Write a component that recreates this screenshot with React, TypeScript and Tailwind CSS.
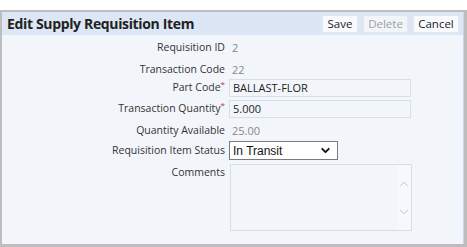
import { ChevronDown, ChevronUp } from "lucide-react";

const font = { fontFamily: "'Open Sans', 'Noto Sans', sans-serif" };

function Label({ text, req }: { text: string; req?: boolean }) {
  return (
    <div className="w-[224px] shrink-0 pr-[1px] text-right text-[10.5px] text-[#333]">
      {text}
      {req && <sup className="text-[8px] text-[#a33]">*</sup>}
    </div>
  );
}

export default function App() {
  return (
    <div className="bg-white pt-[10px] h-[247px]" style={font}>
      <div className="h-[237px] border-t-2 border-l-2 border-r-[3px] border-b-[3px] border-[#bdbdbd]">
        <div className="flex h-full flex-col border-r border-[#c8d7ee] bg-[#f2f6fb]">
          {/* header */}
          <div className="flex h-[23px] items-center justify-between bg-[#dce6f4] pl-[5px] pr-[4px]">
            <h1 className="text-[14px] font-bold text-[#222] tracking-[-0.35px]">Edit Supply Requisition Item</h1>
            <div className="flex gap-[5px]">
              <button className="h-[18px] w-[36px] rounded-[2px] border border-[#e2e8f0] bg-[#f8fafd] text-[11.5px] leading-none text-[#222]">Save</button>
              <button className="h-[18px] w-[45px] rounded-[2px] border border-[#e2e8f0] bg-[#f1f5fa] text-[11.5px] leading-none text-[#9aa0a8]">Delete</button>
              <button className="h-[18px] w-[46px] rounded-[2px] border border-[#e2e8f0] bg-[#f8fafd] text-[11.5px] leading-none text-[#222]">Cancel</button>
            </div>
          </div>

          {/* form */}
          <div className="flex flex-col pt-[3px]">
            <div className="flex h-[20px] items-center gap-[6px]">
              <Label text="Requisition ID" />
              <span className="text-[11px] text-[#888]">2</span>
            </div>
            <div className="mt-[3px] flex h-[18px] items-center gap-[6px]">
              <Label text="Transaction Code" />
              <span className="text-[11px] text-[#888]">22</span>
            </div>
            <div className="flex h-[18px] items-center gap-[3px]">
              <Label text="Part Code" req />
              <div className="flex h-[18px] w-[182px] items-center border border-[#d6dee9] bg-[#f2f6fb] px-[3px] text-[11px] text-[#222]">BALLAST-FLOR</div>
            </div>
            <div className="mt-[3px] flex h-[18px] items-center gap-[3px]">
              <Label text="Transaction Quantity" req />
              <div className="flex h-[18px] w-[182px] items-center border border-[#d6dee9] bg-[#f2f6fb] px-[3px] text-[11px] text-[#222]">5.000</div>
            </div>
            <div className="mt-[3px] flex h-[20px] items-center gap-[6px]">
              <Label text="Quantity Available" />
              <span className="text-[11px] text-[#888]">25.00</span>
            </div>
            <div className="flex h-[19px] items-center gap-[3px]">
              <Label text="Requisition Item Status" />
              <div
                className="flex h-[19px] w-[109px] items-center justify-between border border-[#7a7a7a] bg-white pl-[3px] pr-[5px] text-[12px] text-[#111]"
                style={{ fontFamily: "'Liberation Sans', Arial, sans-serif" }}
              >
                <span>In Transit</span>
                <ChevronDown size={13} strokeWidth={3.5} className="text-[#111]" />
              </div>
            </div>
            <div className="mt-[4px] flex items-start gap-[4px]">
              <div className="pt-[1px]">
                <Label text="Comments" />
              </div>
              <div className="flex h-[67px] w-[182px] border border-[#d6dee9] bg-[#f2f6fb]">
                <div className="flex-1" />
                <div className="flex w-[14px] flex-col items-center justify-center gap-[14px] bg-[#f6f8fb]">
                  <ChevronUp size={14} strokeWidth={1.5} className="text-[#b8b8b8]" />
                  <ChevronDown size={14} strokeWidth={1.5} className="text-[#b8b8b8]" />
                </div>
              </div>
            </div>
          </div>
        </div>
      </div>
    </div>
  );
}
